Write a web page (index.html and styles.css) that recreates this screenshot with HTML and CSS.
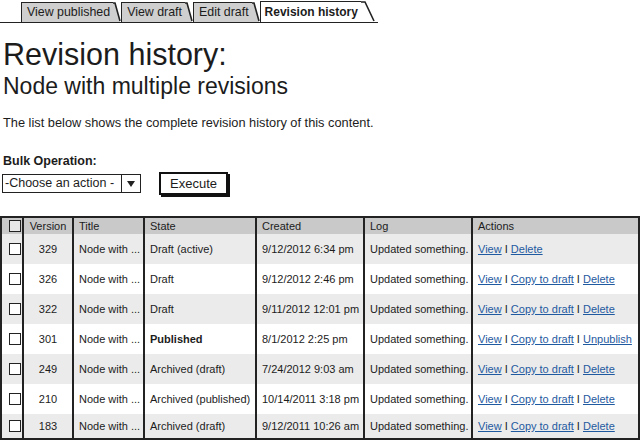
FILE: index.html
```html
<!DOCTYPE html>
<html>
<head>
<meta charset="utf-8">
<link rel="stylesheet" href="styles.css">
</head>
<body>
<div class="tabs">
  <div class="tab"><span class="tab-body">View published</span><svg class="slant" width="8" height="20" viewBox="0 0 8 20"><polygon points="0,1 2,1 7,20 0,20" fill="#cfcfcf"/><polyline points="0,1 2,1 7,19" fill="none" stroke="#222" stroke-width="1.6"/></svg></div>
  <div class="tab"><span class="tab-body">View draft</span><svg class="slant" width="8" height="20" viewBox="0 0 8 20"><polygon points="0,1 2,1 7,20 0,20" fill="#cfcfcf"/><polyline points="0,1 2,1 7,19" fill="none" stroke="#222" stroke-width="1.6"/></svg></div>
  <div class="tab"><span class="tab-body">Edit draft</span><svg class="slant" width="8" height="20" viewBox="0 0 8 20"><polygon points="0,1 2,1 7,20 0,20" fill="#cfcfcf"/><polyline points="0,1 2,1 7,19" fill="none" stroke="#222" stroke-width="1.6"/></svg></div>
  <div class="tab active"><span class="tab-body">Revision history</span><svg class="slant" width="14" height="21" viewBox="0 0 14 21"><polygon points="0,1 4,1 13,21 0,21" fill="#fff"/><polyline points="0,1 4,1 13,20" fill="none" stroke="#222" stroke-width="1.6"/></svg></div>
</div>

<h1 class="title">Revision history:</h1>
<h2 class="subtitle">Node with multiple revisions</h2>
<p class="intro">The list below shows the complete revision history of this content.</p>

<div class="bulk-label">Bulk Operation:</div>
<div class="bulk-row">
  <div class="select"><span class="select-text">-Choose an action -</span><span class="select-arrow"><svg width="10" height="8" viewBox="0 0 10 8"><polygon points="1,1 9,1 5,7" fill="#222"/></svg></span></div>
  <div class="button">Execute</div>
</div>

<table class="rev">
  <colgroup>
    <col class="c-check"><col class="c-ver"><col class="c-title"><col class="c-state"><col class="c-created"><col class="c-log"><col class="c-actions">
  </colgroup>
  <thead>
    <tr><th><span class="cb"></span></th><th class="center">Version</th><th>Title</th><th>State</th><th>Created</th><th>Log</th><th>Actions</th></tr>
  </thead>
  <tbody>
    <tr class="alt"><td><span class="cb"></span></td><td class="center">329</td><td>Node with ...</td><td>Draft (active)</td><td>9/12/2012 6:34 pm</td><td>Updated something.</td><td><a href="#">View</a> I <a href="#">Delete</a></td></tr>
    <tr><td><span class="cb"></span></td><td class="center">326</td><td>Node with ...</td><td>Draft</td><td>9/12/2012 2:46 pm</td><td>Updated something.</td><td><a href="#">View</a> I <a href="#">Copy to draft</a> I <a href="#">Delete</a></td></tr>
    <tr class="alt"><td><span class="cb"></span></td><td class="center">322</td><td>Node with ...</td><td>Draft</td><td>9/11/2012 12:01 pm</td><td>Updated something.</td><td><a href="#">View</a> I <a href="#">Copy to draft</a> I <a href="#">Delete</a></td></tr>
    <tr><td><span class="cb"></span></td><td class="center">301</td><td>Node with ...</td><td><b>Published</b></td><td>8/1/2012 2:25 pm</td><td>Updated something.</td><td><a href="#">View</a> I <a href="#">Copy to draft</a> I <a href="#">Unpublish</a></td></tr>
    <tr class="alt"><td><span class="cb"></span></td><td class="center">249</td><td>Node with ...</td><td>Archived (draft)</td><td>7/24/2012 9:03 am</td><td>Updated something.</td><td><a href="#">View</a> I <a href="#">Copy to draft</a> I <a href="#">Delete</a></td></tr>
    <tr><td><span class="cb"></span></td><td class="center">210</td><td>Node with ...</td><td>Archived (published)</td><td>10/14/2011 3:18 pm</td><td>Updated something.</td><td><a href="#">View</a> I <a href="#">Copy to draft</a> I <a href="#">Delete</a></td></tr>
    <tr class="alt last"><td><span class="cb"></span></td><td class="center">183</td><td>Node with ...</td><td>Archived (draft)</td><td>9/12/2011 10:26 am</td><td>Updated something.</td><td><a href="#">View</a> I <a href="#">Copy to draft</a> I <a href="#">Delete</a></td></tr>
  </tbody>
</table>
</body>
</html>
```
FILE: styles.css
```css
html, body {
  margin: 0;
  padding: 0;
  background: #fff;
}
body {
  font-family: "Liberation Sans", Arial, sans-serif;
  color: #1c1c1c;
  width: 640px;
  height: 445px;
  overflow: hidden;
}
.tabs {
  display: flex;
  align-items: flex-end;
  width: 378px;
  height: 23px;
  border-bottom: 1.5px solid #222;
  padding-left: 21px;
  box-sizing: border-box;
}
.tab {
  display: flex;
  align-items: flex-end;
  flex-shrink: 0;
  height: 20px;
}
.tab-body {
  display: flex;
  align-items: center;
  height: 19px;
  padding: 0 3px 0 5px;
  background: #cfcfcf;
  border-left: 1.6px solid #222;
  border-top: 1.6px solid #222;
  font-size: 12.4px;
  line-height: 19px;
  white-space: nowrap;
}
.tab .slant {
  display: block;
  flex-shrink: 0;
}
.tab.active {
  height: 21px;
}
.tab.active .tab-body {
  background: #fff;
  height: 20px;
  font-weight: bold;
  font-size: 12px;
  padding: 0 3px 0 4px;
}
.title {
  margin: 14px 0 0 3px;
  font-size: 30.5px;
  font-weight: normal;
  line-height: 35px;
}
.subtitle {
  margin: 0 0 0 3px;
  font-size: 23px;
  font-weight: normal;
  line-height: 28px;
}
.intro {
  margin: 15px 0 0 3px;
  font-size: 12.8px;
  line-height: 16px;
}
.bulk-label {
  margin: 22px 0 0 3px;
  font-size: 12.5px;
  font-weight: bold;
  line-height: 16px;
}
.bulk-row {
  display: flex;
  align-items: flex-start;
  margin: 5px 0 0 2px;
  gap: 18px;
}
.select {
  display: flex;
  width: 139px;
  height: 19px;
  border: 1.5px solid #222;
  box-sizing: border-box;
  font-size: 12.5px;
}
.select-text {
  flex: 1;
  padding-left: 2px;
  line-height: 16px;
}
.select-arrow {
  width: 18px;
  border-left: 1.5px solid #222;
  display: flex;
  align-items: center;
  justify-content: center;
}
.button {
  width: 69px;
  height: 23px;
  margin-top: -2px;
  border: 2px solid #111;
  box-sizing: border-box;
  box-shadow: 2px 2px 0 #111;
  text-align: center;
  font-size: 13px;
  line-height: 19px;
}
.rev {
  margin-top: 21px;
  width: 638px;
  border-collapse: collapse;
  border: 2px solid #222;
  font-size: 11px;
  table-layout: fixed;
}
.c-check { width: 22px; }
.c-ver { width: 50px; }
.c-title { width: 71px; }
.c-state { width: 112px; }
.c-created { width: 108px; }
.c-log { width: 108px; }
.c-actions { width: 167px; }
.rev th, .rev td {
  text-align: left;
  padding: 0 0 0 5px;
  white-space: nowrap;
  overflow: hidden;
  border-left: 2px solid #222;
}
.rev th:first-child, .rev td:first-child {
  border-left: none;
  padding: 0 0 0 7px;
}
.rev th {
  background: #c9c9c9;
  font-weight: normal;
  height: 16px;
  line-height: 16px;
}
.rev td {
  height: 30px;
  line-height: 14px;
}
.rev tr.last td {
  height: 24px;
}
.rev tr.alt td {
  background: #ebebeb;
}
.rev .center {
  text-align: center;
  padding: 0;
}
.cb {
  display: block;
  width: 10px;
  height: 10px;
  border: 1.5px solid #222;
  background: #fff;
}
.rev th .cb {
  background: #e8e8e8;
}
a {
  color: #1f5aa0;
  text-decoration: underline;
}
```
